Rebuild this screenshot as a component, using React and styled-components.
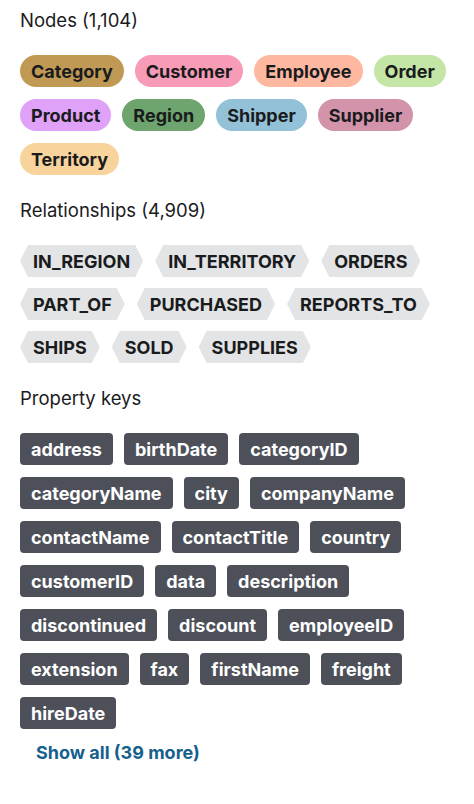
import styled, { createGlobalStyle } from "styled-components"

const Global = createGlobalStyle`
  body {
    margin: 0;
    background: #ffffff;
    font-family: Inter, "Noto Sans", "Liberation Sans", sans-serif;
    color: #1a1b1d;
  }
`

const Panel = styled.div`
  padding: 8px 20px 20px 20px;
  width: 474px;
  box-sizing: border-box;
`

const Section = styled.section`
  margin-bottom: 23px;
`

const Heading = styled.h3`
  margin: 0 0 23px 0;
  font-size: 18.5px;
  font-weight: 400;
  line-height: 24px;
  color: #1a1b1d;
`

const ChipList = styled.div`
  display: flex;
  flex-wrap: wrap;
  gap: ${(p) => p.$rowGap || "12px"} ${(p) => p.$colGap || "11px"};
`

const NodeChip = styled.span`
  display: inline-flex;
  align-items: center;
  height: 32px;
  padding: 0 11px;
  border-radius: 16px;
  background: ${(p) => p.$color};
  font-size: 18px;
  font-weight: 700;
  color: #1a1b1d;
  box-sizing: border-box;
`

const RelChip = styled.span`
  display: inline-flex;
  align-items: center;
  height: 32px;
  padding: 0 13px;
  background: #e3e4e6;
  clip-path: polygon(8px 0, calc(100% - 8px) 0, 100% 50%, calc(100% - 8px) 100%, 8px 100%, 0 50%);
  font-size: 18px;
  font-weight: 700;
  color: #1a1b1d;
`

const KeyChip = styled.span`
  display: inline-flex;
  align-items: center;
  height: 32px;
  padding: 0 11px;
  border-radius: 4px;
  background: #4d5059;
  font-size: 18px;
  font-weight: 700;
  color: #ffffff;
`

const ShowAll = styled.button`
  margin-top: 8px;
  margin-left: 0;
  padding: 0 16px;
  height: 30px;
  border: none;
  background: transparent;
  font-family: inherit;
  font-size: 18px;
  font-weight: 700;
  color: #15608c;
  cursor: pointer;
`

const nodes = [
  ["Category", "#c09a55"],
  ["Customer", "#f79bb6"],
  ["Employee", "#ffb8a0"],
  ["Order", "#c3e6a6"],
  ["Product", "#dfa2f8"],
  ["Region", "#6ea46d"],
  ["Shipper", "#93c1d7"],
  ["Supplier", "#d293ab"],
  ["Territory", "#f9d39c"],
]

const rels = [
  "IN_REGION",
  "IN_TERRITORY",
  "ORDERS",
  "PART_OF",
  "PURCHASED",
  "REPORTS_TO",
  "SHIPS",
  "SOLD",
  "SUPPLIES",
]

const keys = [
  "address",
  "birthDate",
  "categoryID",
  "categoryName",
  "city",
  "companyName",
  "contactName",
  "contactTitle",
  "country",
  "customerID",
  "data",
  "description",
  "discontinued",
  "discount",
  "employeeID",
  "extension",
  "fax",
  "firstName",
  "freight",
  "hireDate",
]

export default function App() {
  return (
    <>
      <Global />
      <Panel>
        <Section>
          <Heading>Nodes (1,104)</Heading>
          <ChipList>
            {nodes.map(([name, color]) => (
              <NodeChip key={name} $color={color}>{name}</NodeChip>
            ))}
          </ChipList>
        </Section>
        <Section>
          <Heading>Relationships (4,909)</Heading>
          <ChipList $rowGap="11px" $colGap="12px">
            {rels.map((r) => (
              <RelChip key={r}>{r}</RelChip>
            ))}
          </ChipList>
        </Section>
        <Section>
          <Heading>Property keys</Heading>
          <ChipList>
            {keys.map((k) => (
              <KeyChip key={k}>{k}</KeyChip>
            ))}
          </ChipList>
          <ShowAll>Show all (39 more)</ShowAll>
        </Section>
      </Panel>
    </>
  )
}
